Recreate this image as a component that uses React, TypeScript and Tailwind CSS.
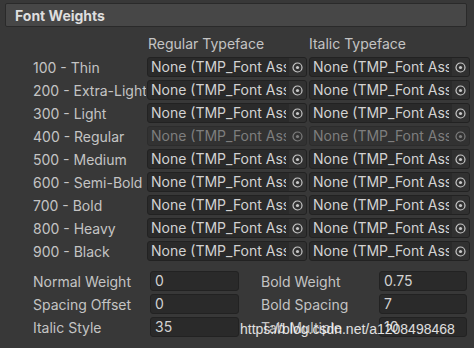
import React from 'react'

const weights = [
  { label: '100 - Thin' },
  { label: '200 - Extra-Light' },
  { label: '300 - Light' },
  { label: '400 - Regular', disabled: true },
  { label: '500 - Medium' },
  { label: '600 - Semi-Bold' },
  { label: '700 - Bold' },
  { label: '800 - Heavy' },
  { label: '900 - Black' },
]

const PickerIcon = ({ dim }: { dim?: boolean }) => (
  <svg width="11" height="11" viewBox="0 0 11 11" className={dim ? 'opacity-50' : ''}>
    <circle cx="5.5" cy="5.5" r="4.5" fill="none" stroke="#c8c8c8" strokeWidth="1.2" />
    <circle cx="5.5" cy="5.5" r="1.6" fill="#c8c8c8" />
  </svg>
)

const ObjectField = ({ width, disabled }: { width: string; disabled?: boolean }) => (
  <div
    className={`${width} h-[20px] flex rounded-[3px] border ${
      disabled ? 'bg-[#323232] border-[#2c2c2c] text-[#7e7e7e]' : 'bg-[#2a2a2a] border-[#222222] text-[#d2d2d2]'
    }`}
  >
    <div className="flex-1 overflow-hidden whitespace-nowrap ml-[3px] mr-[3px] leading-[18px]">None (TMP_Font Asset)</div>
    <div className={`w-[17px] flex items-center justify-center rounded-r-[2px] ${disabled ? '' : 'bg-[#313131]'}`}>
      <PickerIcon dim={disabled} />
    </div>
  </div>
)

const NumberField = ({ value }: { value: string }) => (
  <div className="h-[20px] flex-1 rounded-[3px] bg-[#2a2a2a] border border-[#222222] pl-[4px] leading-[18px] text-[#d2d2d2]">
    {value}
  </div>
)

const App = () => {
  return (
    <div className="w-[474px] h-[348px] bg-[#383838] overflow-hidden relative font-['Inter',sans-serif] text-[14px] text-[#c4c4c4]">
      {/* Section header */}
      <div className="pt-[3px] pl-[5px] pr-[7px]">
        <div className="h-[24px] bg-[#474747] border border-[#2a2a2a] rounded-[2px] flex items-center pl-[9px] font-bold text-[#dedede]">
          Font Weights
        </div>
      </div>

      {/* Column titles */}
      <div className="flex h-[20px] items-center mt-[6px]">
        <div className="w-[148px]" />
        <div className="w-[161px]">Regular Typeface</div>
        <div>Italic Typeface</div>
      </div>

      {/* Weight rows */}
      <div className="flex flex-col gap-[3px] mt-[4px]">
        {weights.map((w, i) => (
          <div key={i} className="flex items-center h-[20px]">
            <div className="ml-[33px] w-[113px] mr-[1px] overflow-hidden whitespace-nowrap">{w.label}</div>
            <ObjectField width="w-[160px]" disabled={w.disabled} />
            <div className="w-[2px]" />
            <ObjectField width="w-[161px]" disabled={w.disabled} />
          </div>
        ))}
      </div>

      {/* Settings */}
      <div className="flex flex-col gap-[3px] mt-[10px]">
        {[
          ['Normal Weight', '0', 'Bold Weight', '0.75'],
          ['Spacing Offset', '0', 'Bold Spacing', '7'],
          ['Italic Style', '35', 'Tab Multiple', '10'],
        ].map(([l1, v1, l2, v2], i) => (
          <div key={i} className="flex items-center h-[20px]">
            <div className="ml-[33px] w-[117px] whitespace-nowrap">{l1}</div>
            <div className="w-[89px] flex">
              <NumberField value={v1} />
            </div>
            <div className="ml-[22px] w-[118px] whitespace-nowrap">{l2}</div>
            <div className="w-[88px] flex">
              <NumberField value={v2} />
            </div>
          </div>
        ))}
      </div>

      {/* Watermark */}
      <div className="absolute left-[240px] top-[319px] font-['Liberation_Sans',Arial,sans-serif] text-[14px] text-white/85 whitespace-nowrap">
        https://blog.csdn.net/a1208498468
      </div>
    </div>
  )
}

export default App
